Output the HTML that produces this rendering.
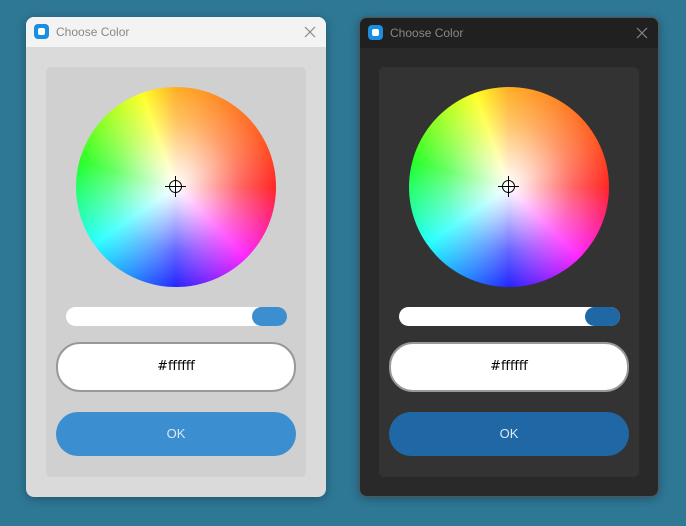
<!DOCTYPE html>
<html><head><style>
body{margin:0;width:686px;height:526px;background:#2e7896;position:relative;overflow:hidden;font-family:"Liberation Sans",sans-serif}
.win{position:absolute;top:17px;width:300px;height:480px;border-radius:8px;overflow:hidden;box-shadow:0 2px 10px rgba(0,0,0,.3)}
.tb{height:30px;position:relative}
.ic{position:absolute;left:8px;top:7px;width:15px;height:15px;border-radius:4px;background:#1a8fe0}
.ic:after{content:"";position:absolute;left:4px;top:4px;width:7px;height:7px;border-radius:2px;background:#fff}
.tt{position:absolute;left:30px;top:8px;font-size:12px;color:#888}
.x{position:absolute;right:10px;top:9px}
.panel{position:absolute;left:20px;top:50px;width:260px;height:410px;border-radius:5px}
.wheel{position:absolute;left:30px;top:20px;width:200px;height:200px;border-radius:50%;
background:radial-gradient(circle,#fff 0,rgba(255,255,255,.85) 12%,rgba(255,255,255,.4) 45%,rgba(255,255,255,0) 85%),conic-gradient(from 0deg,#ffa000 0deg,#ff4000 60deg,#f00 90deg,#f0f 135deg,#00f 180deg,#0ff 235deg,#0f0 285deg,#ff0 340deg,#ffa000 360deg)}
.cross{position:absolute;left:93px;top:93px;width:11px;height:11px;border:1.5px solid #000;border-radius:50%}
.cross:before{content:"";position:absolute;left:4.5px;top:-5px;width:1.5px;height:21px;background:#000}
.cross:after{content:"";position:absolute;top:4.5px;left:-5px;height:1.5px;width:21px;background:#000}
.sl{position:absolute;left:20px;top:240px;width:221px;height:19px;border-radius:10px;background:#fff}
.th{position:absolute;right:0;top:0;width:35px;height:19px;border-radius:10px}
.hex{position:absolute;left:10px;top:275px;width:236px;height:46px;border-radius:24px;background:#fff;border:2px solid #999;text-align:center;line-height:46px;font-size:13px;color:#000;font-family:"DejaVu Sans",sans-serif}
.ok{position:absolute;left:10px;top:345px;width:240px;height:44px;border-radius:22px;text-align:center;line-height:44px;font-size:13px;color:#dde8f4}
</style></head><body>
<div class="win" style="left:26px;background:#dadada">
<div class="tb" style="background:#f3f3f3"><div class="ic"></div><div class="tt">Choose Color</div><svg class="x" width="12" height="12"><path d="M1 1L11 11M11 1L1 11" stroke="#888" stroke-width="1.2"/></svg></div>
<div class="panel" style="background:#d0d0d0"><div class="wheel"><div class="cross"></div></div>
<div class="sl"><div class="th" style="background:#3b8fd1"></div></div>
<div class="hex">#ffffff</div><div class="ok" style="background:#3b8fd1">OK</div></div></div>
<div class="win" style="left:359px;background:#292929;border:1px solid #555;box-sizing:border-box">
<div class="tb" style="background:#202020"><div class="ic"></div><div class="tt">Choose Color</div><svg class="x" width="12" height="12"><path d="M1 1L11 11M11 1L1 11" stroke="#888" stroke-width="1.2"/></svg></div>
<div class="panel" style="background:#333;left:19px;top:49px"><div class="wheel"><div class="cross"></div></div>
<div class="sl"><div class="th" style="background:#1f68a5"></div></div>
<div class="hex">#ffffff</div><div class="ok" style="background:#1f68a5">OK</div></div></div>
</body></html>
